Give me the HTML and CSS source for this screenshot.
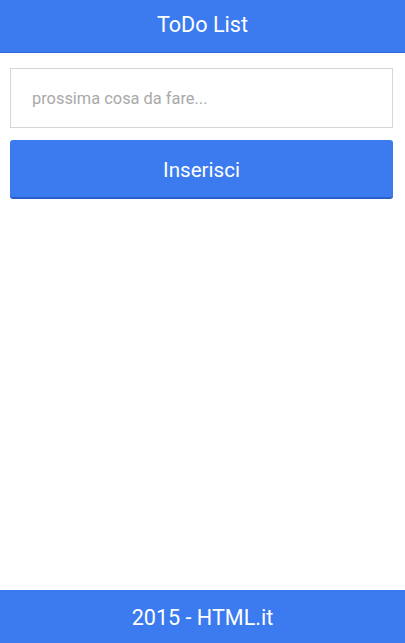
FILE: index.html
```html
<!DOCTYPE html>
<html lang="it">
<head>
<meta charset="utf-8">
<title>ToDo List</title>
<link rel="stylesheet" href="styles.css">
</head>
<body>
<div class="app">
  <header class="bar bar-top">ToDo List</header>
  <main class="content">
    <input class="todo-input" type="text" placeholder="prossima cosa da fare...">
    <button class="btn">Inserisci</button>
    <ul class="list"></ul>
  </main>
  <footer class="bar bar-bottom">2015 - HTML.it</footer>
</div>
</body>
</html>
```

FILE: styles.css
```css
html, body {
  margin: 0;
  padding: 0;
  height: 100%;
  background: #ffffff;
}
body {
  font-family: Roboto, "Noto Sans", sans-serif;
}
.app {
  display: flex;
  flex-direction: column;
  height: 643px;
}
.bar {
  background: #3b7bef;
  color: #ffffff;
  text-align: center;
  font-size: 21.6px;
  height: 53px;
  line-height: 53px;
  flex: none;
}
.bar-top {
  height: 52px;
  line-height: 50px;
  border-bottom: 1px solid #2f68d6;
}
.bar-bottom {
  line-height: 55px;
}
.content {
  flex: 1;
  display: flex;
  flex-direction: column;
  gap: 12px;
  padding: 15px 12px 0 10px;
}
.todo-input {
  box-sizing: border-box;
  height: 60px;
  width: 100%;
  border: 1px solid #d6d6d6;
  padding: 0 21px;
  font-family: Roboto, "Noto Sans", sans-serif;
  font-size: 16.4px;
  color: #333;
  outline: none;
}
.todo-input::placeholder {
  color: #a9a9a9;
}
.btn {
  box-sizing: border-box;
  height: 59px;
  width: 100%;
  background: #3b7bef;
  border: none;
  border-bottom: 2px solid #2a5fc7;
  border-radius: 3px;
  color: #ffffff;
  font-family: Roboto, "Noto Sans", sans-serif;
  font-size: 20.6px;
  padding: 3px 0 0;
  cursor: pointer;
}
.list {
  margin: 0;
  padding: 0;
  list-style: none;
}
```
